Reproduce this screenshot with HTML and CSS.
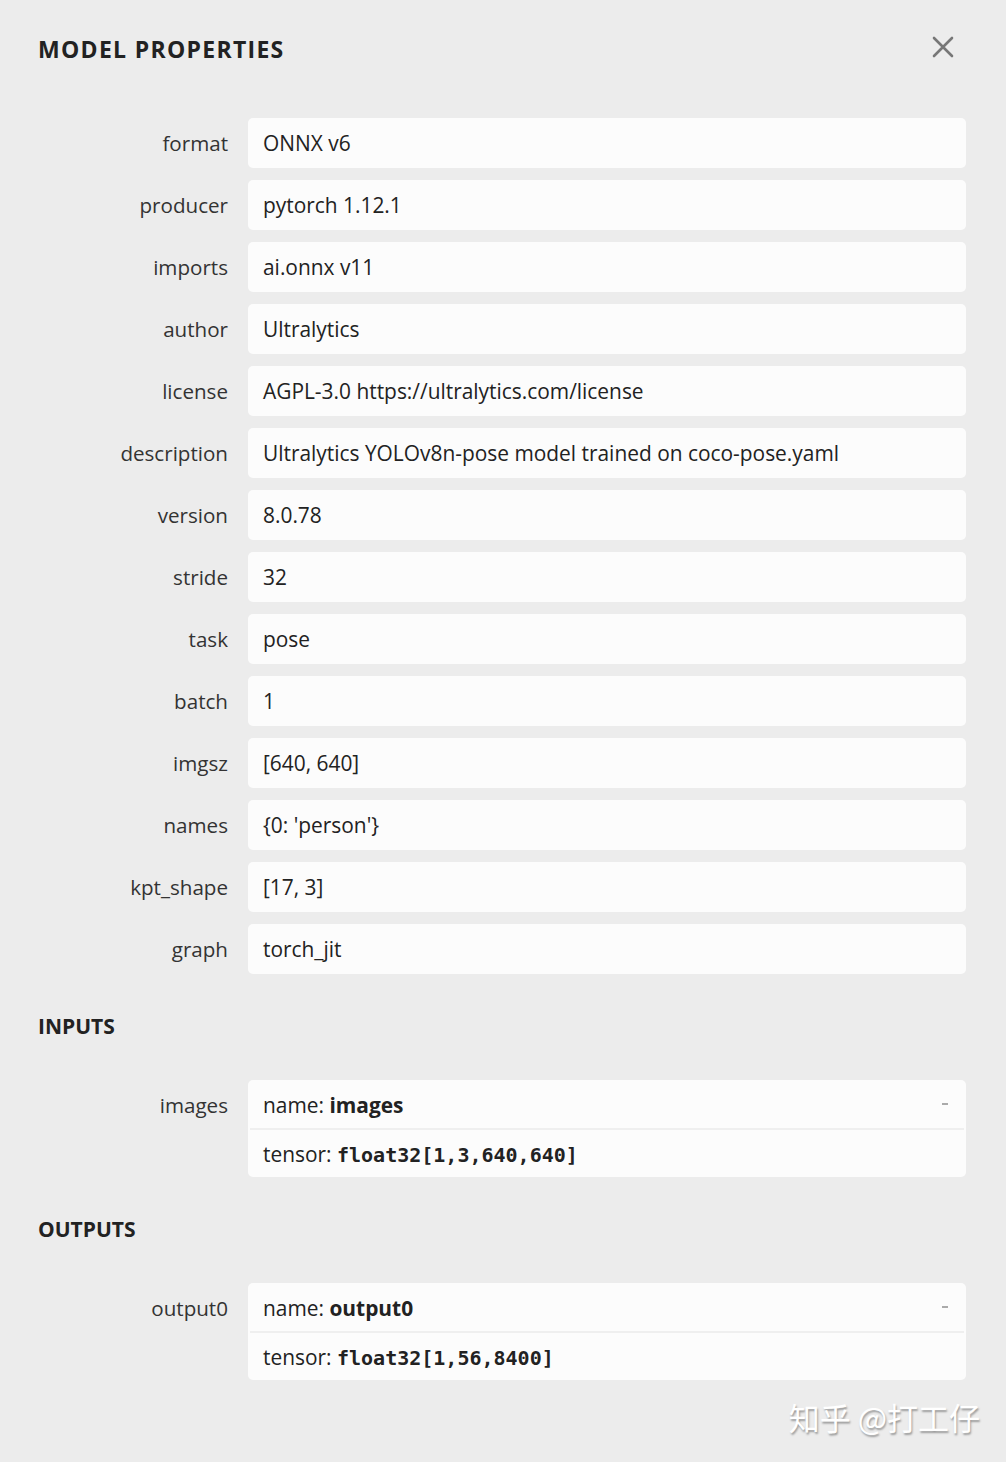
FILE: index.html
```html
<!DOCTYPE html>
<html lang="en">

<head>
    <meta charset="UTF-8">
    <meta name="viewport" content="width=device-width, initial-scale=1.0">
    <title>Model Properties</title>
    <link rel="stylesheet" href="styles.css">
</head>

<body>

    <div id="sidebar">
        <div class="sidebar_header">
            <span class="sidebar_title">MODEL PROPERTIES</span>
            <span class="sidebar_close">
                <svg width="22" height="22" viewBox="0 0 22 22">
                    <path d="M2 2 L20 20 M20 2 L2 20" stroke="#777" stroke-width="2.6" stroke-linecap="round"/>
                </svg>
            </span>
        </div>

        <div class="property_list">
            <div class="property">
                <div class="property_name">format</div>
                <div class="property_value">ONNX v6</div>
            </div>
            <div class="property">
                <div class="property_name">producer</div>
                <div class="property_value">pytorch 1.12.1</div>
            </div>
            <div class="property">
                <div class="property_name">imports</div>
                <div class="property_value">ai.onnx v11</div>
            </div>
            <div class="property">
                <div class="property_name">author</div>
                <div class="property_value">Ultralytics</div>
            </div>
            <div class="property">
                <div class="property_name">license</div>
                <div class="property_value">AGPL-3.0 https://ultralytics.com/license</div>
            </div>
            <div class="property">
                <div class="property_name">description</div>
                <div class="property_value">Ultralytics YOLOv8n-pose model trained on coco-pose.yaml</div>
            </div>
            <div class="property">
                <div class="property_name">version</div>
                <div class="property_value">8.0.78</div>
            </div>
            <div class="property">
                <div class="property_name">stride</div>
                <div class="property_value">32</div>
            </div>
            <div class="property">
                <div class="property_name">task</div>
                <div class="property_value">pose</div>
            </div>
            <div class="property">
                <div class="property_name">batch</div>
                <div class="property_value">1</div>
            </div>
            <div class="property">
                <div class="property_name">imgsz</div>
                <div class="property_value">[640, 640]</div>
            </div>
            <div class="property">
                <div class="property_name">names</div>
                <div class="property_value">{0: 'person'}</div>
            </div>
            <div class="property">
                <div class="property_name">kpt_shape</div>
                <div class="property_value">[17, 3]</div>
            </div>
            <div class="property">
                <div class="property_name">graph</div>
                <div class="property_value">torch_jit</div>
            </div>
        </div>

        <div class="section_title">INPUTS</div>
        <div class="property_list">
            <div class="property">
                <div class="property_name">images</div>
                <div class="argument">
                    <div class="argument_line">
                        <span>name: <b>images</b></span>
                        <span class="toggle"></span>
                    </div>
                    <div class="argument_line argument_type">
                        <span>tensor: <code>float32[1,3,640,640]</code></span>
                    </div>
                </div>
            </div>
        </div>

        <div class="section_title">OUTPUTS</div>
        <div class="property_list">
            <div class="property">
                <div class="property_name">output0</div>
                <div class="argument">
                    <div class="argument_line">
                        <span>name: <b>output0</b></span>
                        <span class="toggle"></span>
                    </div>
                    <div class="argument_line argument_type">
                        <span>tensor: <code>float32[1,56,8400]</code></span>
                    </div>
                </div>
            </div>
        </div>

        <div class="watermark">知乎 @打工仔</div>
    </div>

</body>

</html>
```

FILE: styles.css
```css
*{
    box-sizing: border-box;
}

body{
    margin: 0;
    background-color: #ececec;
    font-family: "Open Sans", "Noto Sans", sans-serif;
    color: #333;
}

#sidebar{
    width: 1006px;
    height: 1462px;
    padding: 0 40px 0 38px;
}

.sidebar_header{
    display: flex;
    justify-content: space-between;
    align-items: center;
    height: 98px;
    padding-right: 12px;
}

.sidebar_title{
    font-size: 23px;
    font-weight: bold;
    letter-spacing: 1.3px;
    color: #222;
}

.sidebar_close{
    display: flex;
    margin-top: -4px;
}

.property_list{
    display: flex;
    flex-direction: column;
    gap: 12px;
    margin-top: 20px;
}

.property{
    display: flex;
    gap: 20px;
}

.property_name{
    flex: 0 0 190px;
    text-align: right;
    font-size: 20.6px;
    line-height: 50px;
    color: #333;
}

.property_value{
    flex: 1;
    height: 50px;
    line-height: 50px;
    padding: 0 15px;
    background-color: #fcfcfc;
    border-radius: 5px;
    font-size: 20.9px;
    color: #222;
}

.section_title{
    margin-top: 37px;
    font-size: 21px;
    font-weight: bold;
    color: #222;
    height: 30px;
    line-height: 30px;
}

.section_title + .property_list{
    margin-top: 39px;
}

.argument{
    flex: 1;
    background-color: #fcfcfc;
    border-radius: 5px;
    font-size: 20.9px;
    color: #222;
}

.argument_line{
    display: flex;
    justify-content: space-between;
    align-items: flex-start;
    height: 48px;
    line-height: 50px;
    padding: 0 15px;
}

.argument_type{
    border-top: 2px solid #efefef;
    margin-left: 2px;
    margin-right: 2px;
    padding-left: 13px;
    height: 49px;
    line-height: 49px;
}

.argument_line b{
    font-weight: bold;
}

.argument_line code{
    font-family: "DejaVu Sans Mono", monospace;
    font-weight: bold;
    font-size: 20px;
}

.toggle{
    width: 6px;
    height: 2px;
    margin-top: 23px;
    margin-right: 3px;
    background-color: #aaa;
}

.watermark{
    margin-top: 14px;
    margin-right: -14px;
    text-align: right;
    font-family: "Noto Sans CJK SC", sans-serif;
    font-size: 31px;
    color: #fff;
    text-shadow: 1px 2px 2px rgba(0, 0, 0, 0.35);
}
```
